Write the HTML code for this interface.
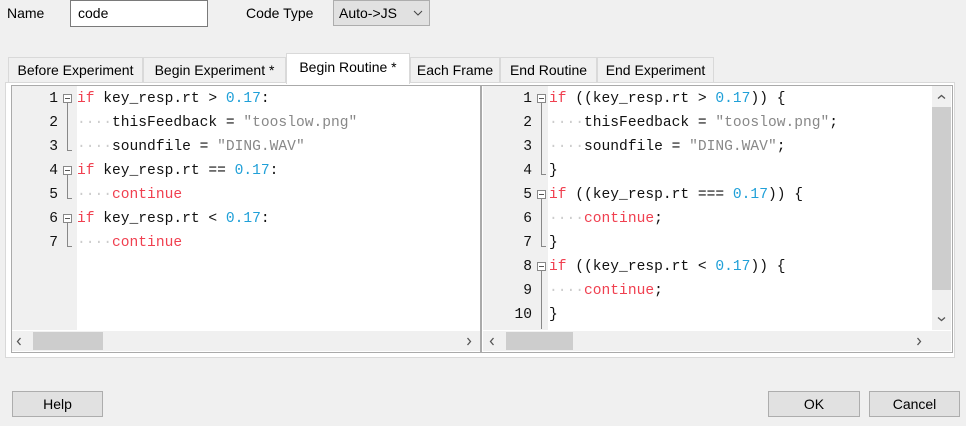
<html><head><style>
body{margin:0;width:966px;height:426px;background:#f0f0f0;font-family:"Liberation Sans",sans-serif;font-size:14px;color:#000;position:relative;overflow:hidden}
.a{position:absolute}
.code{font-family:"Liberation Mono",monospace;font-size:14.6px;white-space:pre;line-height:24px;color:#111}
.k{color:#f04050}.n{color:#20a0d8}.s{color:#888}.d{color:#ccc}
.tab{position:absolute;top:57px;height:25px;border:1px solid #d9d9d9;border-bottom:none;background:#f0f0f0;font-size:14px;line-height:24px;text-align:center;box-sizing:border-box}
.btn{position:absolute;height:26px;top:391px;border:1px solid #adadad;background:#e1e1e1;box-sizing:border-box;text-align:center;line-height:24px;font-size:14px}
.ln{text-align:right;width:40px;color:#111}
.fb{position:absolute;width:9px;height:9px;border:1px solid #888;box-sizing:border-box;background:#fff}
.fb:after{content:"";position:absolute;left:1px;top:3px;width:5px;height:1px;background:#555}
.vl{position:absolute;width:1px;background:#888}
.hl{position:absolute;height:1px;background:#888;width:5px}
svg{position:absolute}
</style></head><body>
<div class="a" style="left:7px;top:5px">Name</div>
<div class="a" style="left:70px;top:0;width:138px;height:27px;border:1px solid #7a7a7a;background:#fff;box-sizing:border-box;padding:4px 7px">code</div>
<div class="a" style="left:246px;top:5px">Code Type</div>
<div class="a" style="left:333px;top:0;width:97px;height:26px;border:1px solid #adadad;background:#e1e1e1;box-sizing:border-box;padding:4px 5px">Auto-&gt;JS</div>
<svg style="left:413px;top:10px" width="10" height="6"><path d="M1 1L5 5L9 1" stroke="#444" fill="none"/></svg>

<div class="a" style="left:5px;top:82px;width:950px;height:276px;border:1px solid #d9d9d9;background:#fff;box-sizing:border-box"></div>
<div class="tab" style="left:8px;width:135px">Before Experiment</div>
<div class="tab" style="left:143px;width:143px">Begin Experiment *</div>
<div class="tab" style="left:286px;width:124px;top:53px;height:31px;background:#fff;line-height:26px;z-index:2">Begin Routine *</div>
<div class="tab" style="left:410px;width:90px">Each Frame</div>
<div class="tab" style="left:500px;width:97px">End Routine</div>
<div class="tab" style="left:597px;width:117px">End Experiment</div>

<!-- left pane -->
<div class="a" style="left:11px;top:85px;width:470px;height:268px;border:1px solid #aaa;background:#fff;box-sizing:border-box"></div>
<div class="a" style="left:12px;top:86px;width:65px;height:244px;background:#f0f0f0"></div>
<div class="a code ln" style="left:18px;top:87px">1
2
3
4
5
6
7</div>
<div class="fb" style="left:63px;top:94px"></div><div class="vl" style="left:67px;top:103px;height:47px"></div><div class="hl" style="left:67px;top:150px"></div>
<div class="fb" style="left:63px;top:166px"></div><div class="vl" style="left:67px;top:175px;height:23px"></div><div class="hl" style="left:67px;top:198px"></div>
<div class="fb" style="left:63px;top:214px"></div><div class="vl" style="left:67px;top:223px;height:23px"></div><div class="hl" style="left:67px;top:246px"></div>
<div class="a code" style="left:77px;top:87px"><span class="k">if</span> key_resp.rt &gt; <span class="n">0.17</span>:
<span class="d">····</span>thisFeedback = <span class="s">"tooslow.png"</span>
<span class="d">····</span>soundfile = <span class="s">"DING.WAV"</span>
<span class="k">if</span> key_resp.rt == <span class="n">0.17</span>:
<span class="d">····</span><span class="k">continue</span>
<span class="k">if</span> key_resp.rt &lt; <span class="n">0.17</span>:
<span class="d">····</span><span class="k">continue</span></div>
<div class="a" style="left:12px;top:331px;width:468px;height:20px;background:#f0f0f0"></div>
<div class="a" style="left:33px;top:332px;width:70px;height:18px;background:#cdcdcd"></div>
<svg style="left:16px;top:337px" width="6" height="9"><path d="M4.5 1L1.5 4.5L4.5 8" stroke="#555" stroke-width="1.3" fill="none"/></svg>
<svg style="left:466px;top:337px" width="6" height="9"><path d="M1.5 1L4.5 4.5L1.5 8" stroke="#555" stroke-width="1.3" fill="none"/></svg>

<!-- right pane -->
<div class="a" style="left:481px;top:85px;width:472px;height:268px;border:1px solid #aaa;background:#fff;box-sizing:border-box"></div>
<div class="a" style="left:483px;top:86px;width:65px;height:244px;background:#f0f0f0"></div>
<div class="a code ln" style="left:490px;top:87px;width:42px">1
2
3
4
5
6
7
8
9
10</div>
<div class="fb" style="left:537px;top:94px"></div><div class="vl" style="left:541px;top:103px;height:71px"></div><div class="hl" style="left:541px;top:174px"></div>
<div class="fb" style="left:537px;top:190px"></div><div class="vl" style="left:541px;top:199px;height:47px"></div><div class="hl" style="left:541px;top:246px"></div>
<div class="fb" style="left:537px;top:262px"></div><div class="vl" style="left:541px;top:271px;height:58px"></div>
<div class="a code" style="left:549px;top:87px"><span class="k">if</span> ((key_resp.rt &gt; <span class="n">0.17</span>)) {
<span class="d">····</span>thisFeedback = <span class="s">"tooslow.png"</span>;
<span class="d">····</span>soundfile = <span class="s">"DING.WAV"</span>;
}
<span class="k">if</span> ((key_resp.rt === <span class="n">0.17</span>)) {
<span class="d">····</span><span class="k">continue</span>;
}
<span class="k">if</span> ((key_resp.rt &lt; <span class="n">0.17</span>)) {
<span class="d">····</span><span class="k">continue</span>;
}</div>
<div class="a" style="left:932px;top:86px;width:19px;height:244px;background:#f0f0f0"></div>
<div class="a" style="left:932px;top:107px;width:19px;height:183px;background:#cdcdcd"></div>
<svg style="left:937px;top:94px" width="9" height="6"><path d="M1 4.5L4.5 1.5L8 4.5" stroke="#555" stroke-width="1.3" fill="none"/></svg>
<svg style="left:937px;top:316px" width="9" height="6"><path d="M1 1.5L4.5 4.5L8 1.5" stroke="#555" stroke-width="1.3" fill="none"/></svg>
<div class="a" style="left:483px;top:331px;width:468px;height:20px;background:#f0f0f0"></div>
<div class="a" style="left:506px;top:332px;width:67px;height:18px;background:#cdcdcd"></div>
<svg style="left:489px;top:337px" width="6" height="9"><path d="M4.5 1L1.5 4.5L4.5 8" stroke="#555" stroke-width="1.3" fill="none"/></svg>
<svg style="left:916px;top:337px" width="6" height="9"><path d="M1.5 1L4.5 4.5L1.5 8" stroke="#555" stroke-width="1.3" fill="none"/></svg>

<div class="btn" style="left:12px;width:91px">Help</div>
<div class="btn" style="left:768px;width:92px">OK</div>
<div class="btn" style="left:869px;width:91px">Cancel</div>
</body></html>
